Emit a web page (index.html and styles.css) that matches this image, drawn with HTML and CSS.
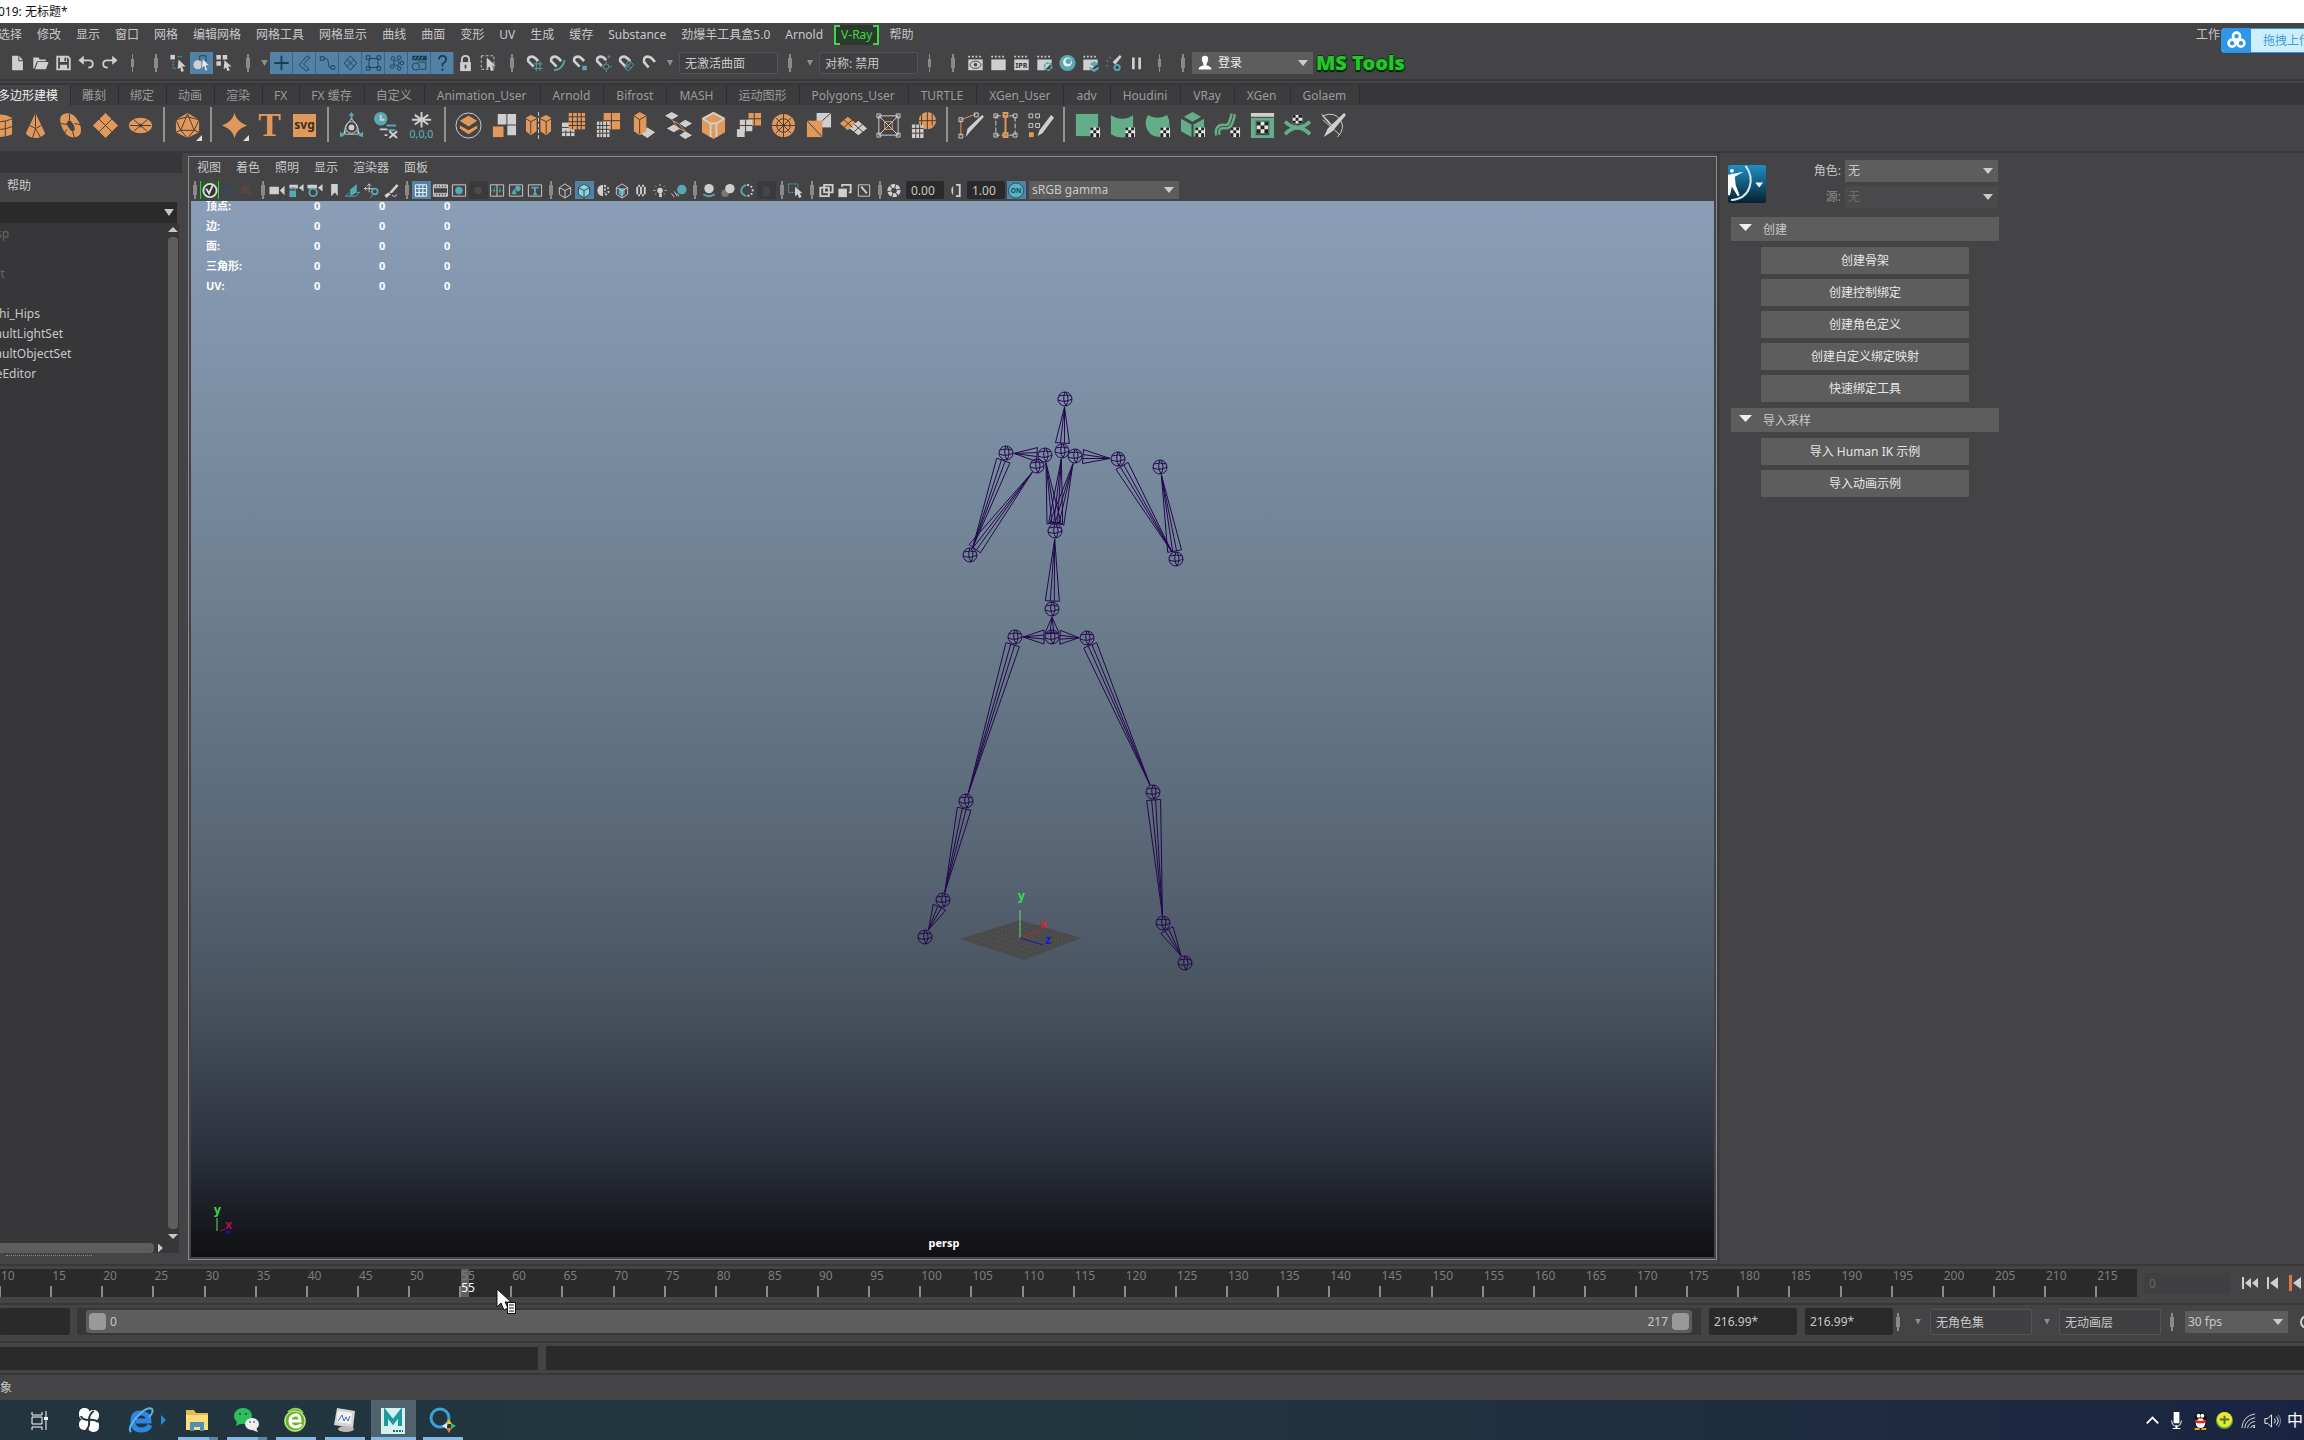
FILE: index.html
```html
<!DOCTYPE html>
<html lang="zh-CN">
<head>
    <meta charset="UTF-8">
    <meta name="viewport" content="width=device-width, initial-scale=1.0">
    <title>019: 无标题*</title>
    <link rel="stylesheet" href="styles.css">
</head>
<body>
    <header class="title-bar">019: 无标题*</header>

    <nav class="menu-bar">
        <button>选择</button>
        <button>修改</button>
        <button>显示</button>
        <button>窗口</button>
        <button>网格</button>
        <button>编辑网格</button>
        <button>网格工具</button>
        <button>网格显示</button>
        <button>曲线</button>
        <button>曲面</button>
        <button>变形</button>
        <button>UV</button>
        <button>生成</button>
        <button>缓存</button>
        <button>Substance</button>
        <button>劲爆羊工具盒5.0</button>
        <button>Arnold</button>
        <button class="vray">V-Ray</button>
        <button>帮助</button>
        <span class="workspace-label">工作</span>
    </nav>

    <!-- 拖拽上传悬浮条 -->
    <div class="upload">
        <svg class="upload-icon" viewBox="0 0 24 24"><g fill="none" stroke="#fff" stroke-width="3"><circle cx="12" cy="7" r="4"/><circle cx="7" cy="15" r="4"/><circle cx="17" cy="15" r="4"/></g></svg>
        <span>拖拽上传</span>
    </div>

    <div class="status-line">
        <button class="tool" aria-label="新建"><svg viewBox="0 0 20 20"><path class="grey" d="M4 2h7v6h5v10H4z"/><path class="grey" d="M12 2l4 5h-4z"/></svg></button>
        <button class="tool" aria-label="打开"><svg viewBox="0 0 20 20"><path class="grey" d="M2 4h6l1 2h7v2H6l-3 8H2z"/><path class="grey" d="M7 9h12l-3 8H4z"/></svg></button>
        <button class="tool" aria-label="保存"><svg viewBox="0 0 20 20"><path class="l-grey thick" d="M3 3h12l2 2v12H3z"/><path class="grey" d="M6 3h8v6H6zM6 12h8v5H6z"/><path class="dark" d="M11 4h2v4h-2z"/></svg></button>
        <button class="tool" aria-label="撤消"><svg viewBox="0 0 20 20"><path class="l-grey thick" d="M5 7h8q4 0 4 4t-5 4"/><path class="grey" d="M1 7l6-5v10z"/></svg></button>
        <button class="tool" aria-label="重做"><svg viewBox="0 0 20 20"><path class="l-grey thick" d="M15 7H7q-4 0-4 4t5 4"/><path class="grey" d="M19 7l-6-5v10z"/></svg></button>
        <i class="sep fold"></i>
        <i class="sep"></i>
        <button class="tool" aria-label="按层次选择"><svg viewBox="0 0 20 20"><path class="grey" d="M1 1h5v5H1z"/><path class="l-teal" d="M9 3h5M4 8v8h4" stroke-dasharray="2 1"/><path class="grey" d="M10 6l8 8h-4l2 5-3 1-1-5-3 2z"/></svg></button>
        <button class="tool on" aria-label="按对象选择"><svg viewBox="0 0 20 20"><path class="l-object" d="M8 8V2h7v6"/><circle class="grey" cx="6" cy="12" r="5"/><path class="pointer" d="M11 5l8 8h-4l2 5-3 1-1-5-3 2z"/></svg></button>
        <button class="tool" aria-label="按组件选择"><svg viewBox="0 0 20 20"><path class="grey" d="M1 1h5v5H1zM8 1h5v5H8zM1 8h5v5H1z"/><path class="grey" d="M10 7l8 7h-4l2 4-3 1-1-4-3 2z"/></svg></button>
        <i class="sep"></i>
        <i class="caret"></i>
        <button class="tool mask" aria-label="控制柄"><svg viewBox="0 0 20 20"><path class="l-dark thick" d="M10 2v16M2 10h16"/></svg></button>
        <button class="tool mask" aria-label="关节"><svg viewBox="0 0 20 20"><path class="l-dark" d="M13 2l3 2-7 7 6 6-3 2-8-7z"/></svg></button>
        <button class="tool mask" aria-label="曲线"><svg viewBox="0 0 20 20"><path class="l-dark" d="M2 3h4v4H2zM14 13h4v4h-4zM6 5q5-1 5 5t3 5"/></svg></button>
        <button class="tool mask" aria-label="曲面"><svg viewBox="0 0 20 20"><path class="l-dark" d="M10 2l7 8-7 8-7-8zM6 6l8 8M14 6l-8 8"/></svg></button>
        <button class="tool mask" aria-label="变形"><svg viewBox="0 0 20 20"><path class="l-dark" d="M5 5h10v10H5zM2 2h4v4H2zM14 2h4v4h-4zM2 14h4v4H2zM14 14h4v4h-4z"/></svg></button>
        <button class="tool mask" aria-label="动力学"><svg viewBox="0 0 20 20"><g class="l-dark"><circle cx="6" cy="5" r="2"/><circle cx="13" cy="4" r="2"/><circle cx="10" cy="10" r="3"/><circle cx="16" cy="10" r="2"/><circle cx="5" cy="14" r="2"/><circle cx="13" cy="16" r="2"/></g></svg></button>
        <button class="tool mask" aria-label="渲染"><svg viewBox="0 0 20 20"><path class="ink" d="M2 2h16v5H2z"/><path class="l-teal" d="M4 6l2-3M8 6l2-3M12 6l2-3"/><circle class="l-dark" cx="6" cy="14" r="4"/><path class="l-dark" d="M8 9h9v8h-7"/></svg></button>
        <button class="tool mask" aria-label="杂项"><svg viewBox="0 0 20 20"><path class="l-dark thick" d="M6 6q0-4 4-4t4 4q0 2-4 5v3M10 16v3"/></svg></button>
        <button class="tool" aria-label="锁定"><svg viewBox="0 0 20 20"><path class="grey" d="M4 9h12v10H4z"/><path class="l-grey thick" d="M6 9V6q0-4 4-4t4 4v3"/><path class="dark" d="M9 12h2v4H9z"/></svg></button>
        <button class="tool" aria-label="高亮选择"><svg viewBox="0 0 20 20"><path class="l-grey" d="M2 2h14v15H2z" stroke-dasharray="3 2"/><path class="grey" d="M8 4l10 9h-4l2 5-3 1-2-5-3 3z"/></svg></button>
        <i class="sep"></i>
        <button class="tool" aria-label="捕捉到栅格"><svg viewBox="0 0 20 20"><path class="l-grey magnet" d="M9 14L3 8q-1-5 4-5 3 0 7 5"/><path class="l-teal" d="M12 8v11M16 8v11M9 11h10M9 16h10"/></svg></button>
        <button class="tool" aria-label="捕捉到曲线"><svg viewBox="0 0 20 20"><path class="l-grey magnet" d="M9 14L3 8q-1-5 4-5 3 0 7 5"/><path class="l-teal thick" d="M6 18q9 0 12-11"/></svg></button>
        <button class="tool" aria-label="捕捉到点"><svg viewBox="0 0 20 20"><path class="l-grey magnet" d="M9 14L3 8q-1-5 4-5 3 0 7 5"/><path class="teal" d="M12 13h5v5h-5z"/></svg></button>
        <button class="tool" aria-label="捕捉到投影中心"><svg viewBox="0 0 20 20"><path class="l-grey magnet" d="M8 13L3 8q-1-5 4-5 3 0 6 4"/><g class="l-teal"><circle cx="13" cy="14" r="3"/><path d="M13 8v2M13 18v2M7 14h2M17 14h2"/><circle cx="16" cy="3" r="1"/></g></svg></button>
        <button class="tool" aria-label="捕捉到平面"><svg viewBox="0 0 20 20"><path class="l-grey magnet" d="M9 14L3 8q-1-5 4-5 3 0 7 5"/><path class="l-teal" d="M13 7l5 5-6 7-5-5zM10 11l5 5M15 9l-6 8"/></svg></button>
        <button class="tool" aria-label="激活"><svg viewBox="0 0 20 20"><path class="l-grey magnet" d="M9 15L4 9Q3 3 8 3q4 0 8 6"/></svg></button>
        <i class="caret wide"></i>
        <input class="field" aria-label="激活曲面" value="无激活曲面">
        <i class="sep"></i>
        <i class="caret wide"></i>
        <input class="field" aria-label="对称" value="对称: 禁用">
        <i class="sep fold"></i>
        <i class="sep"></i>
        <button class="tool" aria-label="渲染视图"><svg viewBox="0 0 20 20"><path class="grey" d="M2 6h16v12H2z"/><path class="l-grey thick" d="M2 3h16" stroke-dasharray="2 2"/><ellipse class="l-dark" cx="10" cy="12" rx="6" ry="4"/><circle class="dark" cx="10" cy="12" r="2"/></svg></button>
        <button class="tool" aria-label="渲染当前帧"><svg viewBox="0 0 20 20"><path class="grey" d="M2 6h16v12H2z"/><path class="l-grey thick" d="M2 3h16" stroke-dasharray="2 2"/></svg></button>
        <button class="tool" aria-label="IPR 渲染"><svg viewBox="0 0 20 20"><path class="grey" d="M2 6h16v12H2z"/><path class="l-grey thick" d="M2 3h16" stroke-dasharray="2 2"/><text class="ipr" x="10" y="15" text-anchor="middle">IPR</text></svg></button>
        <button class="tool" aria-label="渲染设置"><svg viewBox="0 0 20 20"><path class="grey" d="M2 6h16v4l-8 8H2z"/><path class="l-grey thick" d="M2 3h16" stroke-dasharray="2 2"/><circle class="l-teal thick" cx="14" cy="14" r="4" stroke-dasharray="3 1"/></svg></button>
        <button class="tool" aria-label="Hypershade"><svg viewBox="0 0 20 20"><circle class="teal" cx="10" cy="10" r="9"/><circle cx="10" cy="9" r="5" fill="#eee"/><circle class="teal" cx="11" cy="8" r="3"/></svg></button>
        <button class="tool" aria-label="渲染设置编辑器"><svg viewBox="0 0 20 20"><path class="grey" d="M2 6h16v4l-8 8H2z"/><path class="l-grey thick" d="M2 3h16" stroke-dasharray="2 2"/><path class="teal" d="M14 8l5 3-5 3-5-3zM9 14l5 3 5-3v3l-5 3-5-3z"/></svg></button>
        <button class="tool" aria-label="灯光编辑器"><svg viewBox="0 0 20 20"><path class="grey" d="M17 1l2 2-7 9-3-3z"/><path class="l-teal" d="M2 7l3 2M2 13h3M6 3l1 3" stroke-dasharray="2 1"/><circle class="l-teal thick" cx="14" cy="15" r="3"/></svg></button>
        <button class="tool" aria-label="暂停"><svg viewBox="0 0 20 20"><path class="grey" d="M5 4h3v13H5zM12 4h3v13h-3z"/></svg></button>
        <i class="sep fold"></i>
        <i class="sep"></i>
        <label class="login">
            <svg viewBox="0 0 20 20"><path fill="#fff" d="M6 5q0-4 4-4t4 4q0 3-2 6v2q6 1 6 5H2q0-4 6-5v-2Q6 8 6 5z"/></svg>
            <select aria-label="帐户"><option>登录</option></select>
        </label>
        <a class="ms-tools" href="#">MS Tools</a>
    </div>

    <div class="shelf-tabs">
        <button class="active">多边形建模</button>
        <button>雕刻</button>
        <button>绑定</button>
        <button>动画</button>
        <button>渲染</button>
        <button>FX</button>
        <button>FX 缓存</button>
        <button>自定义</button>
        <button class="user">Animation_User</button>
        <button class="user">Arnold</button>
        <button class="user">Bifrost</button>
        <button class="user">MASH</button>
        <button>运动图形</button>
        <button class="user">Polygons_User</button>
        <button class="user">TURTLE</button>
        <button class="user">XGen_User</button>
        <button class="user">adv</button>
        <button class="user">Houdini</button>
        <button class="user">VRay</button>
        <button class="user">XGen</button>
        <button class="user">Golaem</button>
    </div>

    <div class="shelf">
        <button aria-label="圆柱体"><svg viewBox="0 0 28 28"><path class="orange" d="M2 6q12-7 24 0v17q-12 6-24 0z"/><path class="l-dark" d="M2 7q12 6 24 0M2 15q12 6 24 0M10 9v17M19 9v17"/></svg></button>
        <button aria-label="圆锥体"><svg viewBox="0 0 28 28"><path class="orange" d="M14 1l10 21q-3 5-10 5T4 22z"/><path class="l-dark" d="M14 2v14M8 14l6 3 6-3M14 17l-3 10M14 17l5 9"/></svg></button>
        <button aria-label="圆环"><svg viewBox="0 0 28 28"><path class="orange" fill-rule="evenodd" d="M7 2q10-3 16 9 5 12-3 15Q11 28 6 18 0 5 7 2zm5 7q-4 2 0 7 4 6 6 3 1-3-1-6-3-5-5-4z"/><path class="l-dark" d="M4 12l7 1M13 2v7M18 12l6 1M16 20l2 6M10 18l-2 4"/></svg></button>
        <button aria-label="平面"><svg viewBox="0 0 28 28"><path class="orange" d="M14 1l13 13-13 13L1 14z"/><path class="l-dark" d="M7 7l14 14M21 7L7 21"/></svg></button>
        <button aria-label="圆盘"><svg viewBox="0 0 28 28"><ellipse class="orange" cx="14" cy="14" rx="12" ry="8"/><path class="l-dark" d="M3 14h22M7 8l14 12M21 8L7 20"/><circle class="dark" cx="14" cy="14" r="2"/></svg></button>
        <i class="bar"></i>
        <button class="more" aria-label="柏拉图多面体"><svg viewBox="0 0 28 28"><path class="orange" d="M14 1l12 7v13l-12 6-12-6V8z"/><path class="l-dark" d="M14 2l-7 17h14zM2 8l5 11 7 8 7-8 5-11M7 19l-5 2M21 19l5 2M2 8l12-3 12 3"/></svg></button>
        <i class="bar"></i>
        <button class="more" aria-label="超形状"><svg viewBox="0 0 28 28"><path class="orange" d="M14 1q2 9 13 13-11 4-13 13-2-9-13-13Q12 10 14 1z"/></svg></button>
        <button class="type" aria-label="类型">T</button>
        <button aria-label="SVG"><span class="svg-badge">svg</span></button>
        <i class="bar"></i>
        <button aria-label="枢轴"><svg viewBox="0 0 28 28"><path class="l-teal thick" d="M14 2v6M4 24l5-5M24 24l-5-5"/><path class="l-grey" d="M14 7q9 9 7 16H7q-2-7 7-16z"/><circle class="l-grey" cx="14" cy="16" r="6"/><circle class="grey" cx="14" cy="16" r="3"/><path class="teal" d="M14 0l3 4h-6zM2 26v-6l5 5zM26 26v-6l-5 5z"/></svg></button>
        <button aria-label="删除历史"><svg viewBox="0 0 28 28"><circle class="teal" cx="8" cy="7" r="7"/><path class="l-grey" d="M8 3v5h4M7 18h8M12 24h3" stroke-width="2"/><path class="l-teal thick" d="M14 14h10M16 19h7"/><path class="l-grey thick" d="M17 20l8 7M25 20l-8 7"/></svg></button>
        <button aria-label="冻结变换"><svg viewBox="0 0 28 28"><path class="l-grey thick" d="M14 0v16M7 3l14 10M21 3L7 13M4 8h20"/><text class="zeros" x="14" y="27" text-anchor="middle">0,0,0</text></svg></button>
        <i class="bar"></i>
        <button aria-label="结合"><svg viewBox="0 0 28 28"><circle class="l-grey" cx="14" cy="14" r="13"/><path class="orange" d="M14 4l9 5-9 6-9-6zM5 14l9 5 9-5v3l-9 6-9-6z"/></svg></button>
        <button aria-label="分离"><svg viewBox="0 0 28 28"><path class="grey" d="M8 2h9v11H8zM18 2h9v11h-9zM18 14h9v10h-9z"/><path class="orange" d="M3 15h11v11H3z"/></svg></button>
        <button aria-label="镜像"><svg viewBox="0 0 28 28"><path class="orange" d="M1 6l5-3 6 3v14l-6 4-5-4zM16 6l6-3 5 3v14l-5 4-6-4z"/><path class="l-dark" d="M1 7l5 3 6-3M6 10v13M16 7l6 3 5-3M22 10v13"/><path class="l-grey" d="M14 0v28" stroke-dasharray="4 2"/></svg></button>
        <button aria-label="平滑"><svg viewBox="0 0 28 28"><path class="grey" d="M2 11h13v14H2z"/><path class="orange" d="M9 1h17v17H9z"/><path class="l-dark" d="M13 1v17M18 1v17M22 1v17M9 5h17M9 10h17M9 14h17M6 19v6M11 19v6M2 21h13M2 16h7"/></svg></button>
        <button aria-label="减少"><svg viewBox="0 0 28 28"><path class="orange" d="M9 1h17v17H9z"/><path class="grey" d="M2 10h13v16H2z"/><path class="l-dark" d="M17 1v17M9 9h17M5 10v16M8 10v16M12 10v16M2 14h13M2 18h13M2 22h13"/></svg></button>
        <button aria-label="挤出"><svg viewBox="0 0 28 28"><path class="grey" d="M9 21l9-5 8 5-8 6z"/><path class="orange" d="M4 4l6-4 7 4v16l-7 4-6-4z"/><path class="l-dark" d="M4 4l6 4 7-4M10 8v15"/></svg></button>
        <button aria-label="桥接"><svg viewBox="0 0 28 28"><path class="grey" d="M0 4l7-4 7 4-7 4zM15 12l6-4 7 4-7 4zM2 17l7-4 7 4-7 4zM15 24l6-4 7 4-7 4z"/><path class="l-orange" d="M8 9l6 3 7 8-7-3z"/></svg></button>
        <button aria-label="倒角"><svg viewBox="0 0 28 28"><path class="orange" d="M14 0l12 6v15l-12 7-12-7V6z"/><path class="l-grey thick" d="M3 7l8 5v14M25 7l-8 5v14M11 12h6M14 1L3 7M14 1l11 6"/></svg></button>
        <button aria-label="合并"><svg viewBox="0 0 28 28"><path class="orange" d="M14 1h13v13H14z"/><path class="grey" d="M5 8h13v12H5zM2 18h8v8H2z"/><path class="l-dark" d="M14 7h13M20 1v13M11 8v12M5 14h13"/></svg></button>
        <button aria-label="目标焊接"><svg viewBox="0 0 28 28"><circle class="orange" cx="14" cy="14" r="12"/><g class="l-dark"><circle cx="14" cy="14" r="7"/><path d="M14 2v24M2 14h24M6 6l16 16M22 6L6 22"/></g></svg></button>
        <button aria-label="三角化"><svg viewBox="0 0 28 28"><path class="grey" d="M12 1h15v15H12z"/><path class="orange" d="M2 9h16v17H2z"/><path class="l-dark" d="M2 9l16 17M18 9l9-8"/></svg></button>
        <button aria-label="四边形化"><svg viewBox="0 0 28 28"><path class="orange" d="M0 12l8-7 9 7-9 7z"/><path class="grey" d="M10 17l9-8 9 8-9 7z"/><path class="l-dark" d="M4 8l9 8M13 8l-9 8M15 13l9 8M23 13l-9 8"/></svg></button>
        <button aria-label="晶格"><svg viewBox="0 0 28 28"><path class="l-grey" d="M4 4h20v20H4zM4 4l20 20M24 4L4 24M2 2h4v4H2zM22 2h4v4h-4zM2 22h4v4H2zM22 22h4v4h-4z"/><path class="l-orange" d="M10 10h8v8h-8z"/></svg></button>
        <button aria-label="布尔"><svg viewBox="0 0 28 28"><circle class="orange" cx="18" cy="9" r="9"/><path class="grey" d="M2 13h12v14H2z"/><path class="l-dark" d="M18 0v18M9 9h18M6 13v14M10 13v14M2 17h12M2 22h12M12 2v12M23 2v12"/></svg></button>
        <i class="bar"></i>
        <button aria-label="多切割"><svg viewBox="0 0 28 28"><path class="l-orange" d="M4 25V8l16-6"/><path class="grey" d="M26 3l2 2-14 15-5 6 2-9z"/><path class="l-grey" d="M2 6h4v4H2zM2 23h4v4H2zM18 1h4v4h-4z"/></svg></button>
        <button aria-label="插入循环边"><svg viewBox="0 0 28 28"><path class="l-grey" d="M4 4h20v20H4z" stroke-dasharray="5 2"/><path class="l-orange thick" d="M14 5v18M12 1h4v4h-4zM12 22h4v4h-4z"/><path class="l-grey" d="M2 2h4v4H2zM22 2h4v4h-4zM2 22h4v4H2zM22 22h4v4h-4z"/></svg></button>
        <button aria-label="偏移循环边"><svg viewBox="0 0 28 28"><path class="l-grey" d="M2 2h4v4H2zM9 2h4v4H9zM2 12h4v4H2zM9 12h4v4H9z"/><path class="orange" d="M2 21h5v5H2z"/><path class="grey" d="M25 3l3 3-12 16-5 3 2-6z"/></svg></button>
        <i class="bar"></i>
        <button aria-label="平面映射"><svg viewBox="0 0 28 28"><path class="green" d="M2 2h23v23H2z"/><path class="checker-bg" d="M17 16h10v10H17z"/><path class="checker" d="M17 16h3v3h-3zM23 16h3v3h-3zM20 19h3v3h-3zM17 22h3v4h-3zM23 22h3v4h-3z"/></svg></button>
        <button aria-label="圆柱形映射"><svg viewBox="0 0 28 28"><path class="green" d="M2 3q12 8 23 0v20q-12 7-23 0z"/><path class="checker-bg" d="M17 16h10v10H17z"/><path class="checker" d="M17 16h3v3h-3zM23 16h3v3h-3zM20 19h3v3h-3zM17 22h3v4h-3zM23 22h3v4h-3z"/></svg></button>
        <button aria-label="球形映射"><svg viewBox="0 0 28 28"><path class="green" d="M4 3q10 6 20 0 5 10 0 20-9 6-17 0-9-9-3-20z"/><path class="checker-bg" d="M17 16h10v10H17z"/><path class="checker" d="M17 16h3v3h-3zM23 16h3v3h-3zM20 19h3v3h-3zM17 22h3v4h-3zM23 22h3v4h-3z"/></svg></button>
        <button aria-label="自动映射"><svg viewBox="0 0 28 28"><path class="green" d="M14 0l9 5-9 5-9-5zM2 7l11 6v13L2 20zM26 7l-11 6v13l11-6z"/><path class="checker-bg" d="M17 16h10v10H17z"/><path class="checker" d="M17 16h3v3h-3zM23 16h3v3h-3zM20 19h3v3h-3zM17 22h3v4h-3zM23 22h3v4h-3z"/></svg></button>
        <button aria-label="轮廓拉伸"><svg viewBox="0 0 28 28"><path fill="none" stroke="#63ad88" stroke-width="6" d="M4 24q-2-9 6-9 5 1 7-3 2-5 3-10"/><path class="l-dark" d="M4 24q-2-9 6-9 5 1 7-3 2-5 3-10"/><path class="checker-bg" d="M17 16h10v10H17z"/><path class="checker" d="M17 16h3v3h-3zM23 16h3v3h-3zM20 19h3v3h-3zM17 22h3v4h-3zM23 22h3v4h-3z"/></svg></button>
        <button aria-label="UV 编辑器"><svg viewBox="0 0 28 28"><path class="grey" d="M2 1h24v4H2z"/><path class="green" d="M2 6h24v21H2z"/><path class="dark" d="M7 9h14v15H7z"/><path class="checker-bg" d="M8 10h12v12H8z"/><path class="checker" d="M8 10h4v4H8zM16 10h4v4h-4zM12 14h4v4h-4zM8 18h4v4H8zM16 18h4v4h-4z"/></svg></button>
        <button aria-label="3D 切割和缝合"><svg viewBox="0 0 28 28"><path fill="none" stroke="#63ad88" stroke-width="4" d="M1 10q13 12 26 0M1 23q13-13 26 0"/><path class="checker-bg" d="M9 3h10v9H9z"/><path class="checker" d="M9 3h3v3H9zM15 3h4v3h-4zM12 6h3v3h-3zM9 9h3v3H9zM15 9h4v3h-4z"/></svg></button>
        <button aria-label="雕刻"><svg viewBox="0 0 28 28"><path class="l-grey" d="M4 4q12-5 18 4t-3 18M4 8l18 16"/><path class="grey" d="M2 1l8 8 4 5-3-1-7-8zM26 1l2 2-14 17-9 6 4-9z"/></svg></button>
    </div>

    <main class="workspace">
        <aside class="outliner">
            <div class="outliner-menu"><button>帮助</button></div>
            <label class="search"><input aria-label="搜索"><i class="caret"></i></label>
            <div class="outliner-body">
                <ul class="nodes">
                    <li class="dim">persp</li>
                    <li class="dim"></li>
                    <li class="dim">front</li>
                    <li></li>
                    <li>ochi_Hips</li>
                    <li>defaultLightSet</li>
                    <li>defaultObjectSet</li>
                    <li>timeEditor</li>
                </ul>
                <div class="scroll-y"><i class="up"></i><b></b><i class="down"></i></div>
            </div>
            <div class="scroll-x"><b></b><i></i></div>
            <div class="grip"></div>
        </aside>

        <section class="panel">
            <nav class="panel-menu">
                <button>视图</button>
                <button>着色</button>
                <button>照明</button>
                <button>显示</button>
                <button>渲染器</button>
                <button>面板</button>
            </nav>
            <div class="panel-tools">
                <i class="sep"></i>
                <button class="vray-on" aria-label="V-Ray"><svg viewBox="0 0 18 18"><circle cx="9" cy="9" r="7" fill="#333" stroke="#ddd" stroke-width="2"/><path fill="none" stroke="#ddd" stroke-width="2" d="M5 7l3 5 4-9"/></svg></button>
                <button aria-label="IPR"><svg viewBox="0 0 18 18"><circle cx="9" cy="9" r="5" fill="#3d4854"/></svg></button>
                <button aria-label="区域"><svg viewBox="0 0 18 18"><path fill="#5a4540" d="M3 4h9v7l4 5-7-4H3z"/></svg></button>
                <i class="sep"></i>
                <button aria-label="选择摄影机"><svg viewBox="0 0 18 18"><path class="grey" d="M1 5h10v8H1zM12 9l5-5v10z"/></svg></button>
                <button aria-label="锁定摄影机"><svg viewBox="0 0 18 18"><path class="grey" d="M2 3h9v4H2zM12 6l5-4v8z"/><path class="teal" d="M2 9h7v7H2z"/><path class="l-teal" d="M4 9V6h4v3"/></svg></button>
                <button aria-label="摄影机属性"><svg viewBox="0 0 18 18"><path class="grey" d="M1 3h10v4H1zM12 6l5-4v8z"/><circle class="l-teal thick" cx="7" cy="11" r="4"/></svg></button>
                <button aria-label="书签"><svg viewBox="0 0 18 18"><path class="grey" d="M6 2h7v13l-3-4-4 4z"/></svg></button>
                <button aria-label="图像平面"><svg viewBox="0 0 18 18"><path class="teal" d="M6 8l7-6v9l-7 4z"/><path class="l-teal" d="M5 11l-4 4h11l4-4h-3"/></svg></button>
                <button aria-label="二维平移"><svg viewBox="0 0 18 18"><path class="l-grey" d="M1 7h9M6 2v9M4 4l2-2 2 2M3 5L1 7l2 2"/><circle class="l-teal thick" cx="12" cy="10" r="3"/><path class="l-teal" d="M10 13l-3 4"/></svg></button>
                <button aria-label="油性铅笔"><svg viewBox="0 0 18 18"><path class="grey" d="M15 2l2 2-7 8-3-1zM2 14l4-3 3 2-5 4z"/><path class="l-grey" d="M10 14q4 3 5-1"/></svg></button>
                <i class="sep"></i>
                <button class="on" aria-label="栅格"><svg viewBox="0 0 18 18"><path class="l-white" d="M3 3h12v12H3zM7 3v12M11 3v12M3 7h12M3 11h12"/></svg></button>
                <button aria-label="胶片门"><svg viewBox="0 0 18 18"><path class="l-grey" d="M2 3h15v12H2zM2 6h15M2 12h15"/><path class="l-grey thick" d="M3 4h14M3 14h14" stroke-dasharray="2 1"/></svg></button>
                <button aria-label="分辨率门"><svg viewBox="0 0 18 18"><path class="l-grey" d="M2 3h14v12H2z"/><circle class="teal" cx="9" cy="9" r="4"/></svg></button>
                <button class="off" aria-label="门遮罩"><svg viewBox="0 0 18 18"><circle cx="9" cy="9" r="4" fill="#4c4c4c"/></svg></button>
                <button aria-label="区域图"><svg viewBox="0 0 18 18"><path class="l-grey" d="M2 3h14v12H2zM9 3v12" /><path class="l-teal" d="M2 9h14M6 6v6M12 6v6" stroke-dasharray="2 1"/></svg></button>
                <button aria-label="安全动作"><svg viewBox="0 0 18 18"><path class="l-grey" d="M2 3h14v12H2z"/><circle class="teal" cx="11" cy="7" r="3"/><path class="teal" d="M4 13l3-6 3 6z"/></svg></button>
                <button aria-label="安全标题"><svg viewBox="0 0 18 18"><path class="l-grey" d="M2 3h14v12H2z"/><path class="l-teal thick" d="M5 6h8M9 6v7M7 13h4"/></svg></button>
                <i class="sep"></i>
                <button aria-label="线框"><svg viewBox="0 0 18 18"><path class="l-grey" d="M9 2l6 4v7l-6 4-6-4V6zM3 6l6 3 6-3M9 9v8"/></svg></button>
                <button class="on" aria-label="着色"><svg viewBox="0 0 18 18"><path fill="#7fd8e4" d="M9 2l6 4v7l-6 4-6-4V6z"/><path class="l-dark" d="M9 2l6 4v7l-6 4-6-4V6zM3 6l6 3 6-3M9 9v8"/></svg></button>
                <button aria-label="默认材质"><svg viewBox="0 0 18 18"><path class="grey" d="M9 3a6 6 0 000 12z"/><path class="l-grey thick" d="M10 4q5 1 5 5t-5 5M11 7v5" stroke-dasharray="2 2"/></svg></button>
                <button aria-label="着色线框"><svg viewBox="0 0 18 18"><path class="teal" d="M6 6l6 1v6l-4 2-3-3z"/><path class="l-grey" d="M9 2l6 4v7l-6 4-6-4V6zM3 6l6 3 6-3M9 9v8"/></svg></button>
                <button aria-label="纹理"><svg viewBox="0 0 18 18"><path class="l-grey thick" d="M6 4h7M4 6h11M4 8h11M4 10h11M4 12h11M6 14h7" stroke-dasharray="2 2"/></svg></button>
                <button aria-label="灯光"><svg viewBox="0 0 18 18"><circle class="grey" cx="9" cy="9" r="3"/><path class="grey" d="M8 12h3v4H8z"/><path class="l-grey" d="M9 2v2M2 9h2M14 9h2M4 4l1 1M14 4l-1 1M4 13l1-1M14 13l-1-1"/></svg></button>
                <button aria-label="阴影"><svg viewBox="0 0 18 18"><circle class="teal" cx="12" cy="8" r="5"/><path class="l-grey" d="M1 12l3 4M4 10l3 5M7 12l2 3"/></svg></button>
                <i class="sep"></i>
                <button aria-label="环境光遮挡"><svg viewBox="0 0 18 18"><circle class="grey" cx="9" cy="7" r="5"/><path class="l-teal thick" d="M3 13q6 4 12 0"/></svg></button>
                <button aria-label="运动模糊"><svg viewBox="0 0 18 18"><circle cx="6" cy="12" r="4" fill="#777"/><circle class="grey" cx="11" cy="7" r="5"/></svg></button>
                <button aria-label="抗锯齿"><svg viewBox="0 0 18 18"><path class="l-teal thick" d="M8 3Q3 5 3 9t5 6"/><path class="l-grey thick" d="M9 3q6 1 6 6t-6 6" stroke-dasharray="2 2"/></svg></button>
                <button class="off" aria-label="景深"><svg viewBox="0 0 18 18"><path fill="#3c4a4b" d="M6 5h7v10H6z"/></svg></button>
                <i class="sep"></i>
                <button aria-label="隔离选择"><svg viewBox="0 0 18 18"><path class="l-teal" d="M1 2h10v9H1z" stroke-dasharray="2 1"/><path class="grey" d="M8 5l8 7h-3l2 4-3 1-1-4-3 2z"/></svg></button>
                <i class="sep"></i>
                <button aria-label="X 射线"><svg viewBox="0 0 18 18"><path class="l-grey thick" d="M3 6h9v9H3z"/><path class="l-grey thick" d="M7 3h9v8H7z"/></svg></button>
                <button aria-label="X 射线关节"><svg viewBox="0 0 18 18"><path class="grey" d="M2 7h9v9H2z"/><path class="l-grey thick" d="M6 5V3h9v8h-2"/></svg></button>
                <button aria-label="X 射线活动组件"><svg viewBox="0 0 18 18"><path class="l-grey" d="M3 3h12v12H3z"/><path class="l-grey thick" d="M6 5l6 7"/></svg></button>
                <i class="sep"></i>
                <button aria-label="曝光"><svg viewBox="0 0 18 18"><circle cx="9" cy="9" r="5" fill="none" stroke="#cfcfcf" stroke-width="4" stroke-dasharray="4 1"/></svg></button>
                <input class="number" aria-label="曝光值" value="0.00">
                <button aria-label="伽马"><svg viewBox="0 0 18 18"><path class="grey" d="M7 4q-4 5 0 10z"/><path class="l-grey thick" d="M10 3h4v12h-4"/></svg></button>
                <input class="number" aria-label="伽马值" value="1.00">
                <button class="on" aria-label="颜色管理"><svg viewBox="0 0 18 18"><circle cx="9" cy="9" r="8" fill="#56b4c4" stroke="#2b4a5a"/><text class="on-text" x="9" y="12" text-anchor="middle">ON</text></svg></button>
                <select class="gamma" aria-label="视图变换"><option>sRGB gamma</option></select>
            </div>

            <div class="viewport">
                <svg class="scene" viewBox="191 201 1523 1056" preserveAspectRatio="xMidYMid slice">
                    <polygon points="960,939 1020,920 1081,938 1024,960" fill="#4b4a4a"/>
                    <g id="grid" stroke="#5c5b5a" stroke-dasharray="1 3"></g>
                    <g fill="none" stroke-width="1">
                        <path stroke="#5fe070" d="M1020 938v-28"/>
                        <path stroke="#c02828" d="M1023 937l18-7"/>
                        <path stroke="#1818b0" d="M1020 938l23 7"/>
                    </g>
                    <g class="axis">
                        <text x="1018" y="900" fill="#35e04a">y</text>
                        <text x="1040" y="928" fill="#d02828">x</text>
                        <text x="1045" y="944" fill="#1818d0">z</text>
                        <text x="214" y="1214" fill="#35e04a">y</text>
                        <text x="225" y="1229" fill="#b0104a">x</text>
                    </g>
                    <path d="M217 1218v13" stroke="#70d080"/>
                    <path d="M220 1231l5-2" stroke="#a02020"/>
                    <path d="M225 1232h5" stroke="#1c10a0" stroke-width="3"/>
                    <g id="skeleton" class="skeleton"></g>
                    <text class="camera-name" x="944" y="1247" text-anchor="middle">persp</text>
                </svg>
                <table class="hud">
                    <tr><th>顶点:</th><td>0</td><td>0</td><td>0</td></tr>
                    <tr><th>边:</th><td>0</td><td>0</td><td>0</td></tr>
                    <tr><th>面:</th><td>0</td><td>0</td><td>0</td></tr>
                    <tr><th>三角形:</th><td>0</td><td>0</td><td>0</td></tr>
                    <tr><th>UV:</th><td>0</td><td>0</td><td>0</td></tr>
                </table>
            </div>
        </section>

        <aside class="character">
            <div class="character-head">
                <button class="hik" aria-label="HumanIK"><svg viewBox="0 0 40 40"><defs><linearGradient id="hik" x1="0" y1="0" x2="0" y2="1"><stop offset="0" stop-color="#1f8fc4"/><stop offset="1" stop-color="#08202f"/></linearGradient></defs><rect width="39" height="39" rx="2" fill="url(#hik)"/><path fill="none" stroke="#d5ecf6" stroke-width="2" d="M18 1q8 10 4 22T3 36"/><circle cx="4" cy="6" r="2" fill="#fff"/><path fill="#fff" d="M0 10l16-3-9 5 1 9 4 10-2 1-6-10-2 9H0z"/><path fill="#fff" d="M28 18h8l-4 5z"/></svg></button>
                <div class="character-form">
                    <label for="role">角色:</label>
                    <select id="role"><option>无</option></select>
                    <label for="source">源:</label>
                    <select id="source" disabled><option>无</option></select>
                </div>
            </div>
            <div class="group">
                <h2>创建</h2>
                <button>创建骨架</button>
                <button>创建控制绑定</button>
                <button>创建角色定义</button>
                <button>创建自定义绑定映射</button>
                <button>快速绑定工具</button>
            </div>
            <div class="group">
                <h2>导入采样</h2>
                <button>导入 Human IK 示例</button>
                <button>导入动画示例</button>
            </div>
        </aside>
    </main>

    <div class="time-row">
        <div class="timeline">
            <ol id="ticks"></ol>
        </div>
        <input class="current-time" aria-label="当前时间" value="0">
        <div class="playback">
            <button aria-label="转到开头"><svg viewBox="0 0 16 16"><path class="grey" d="M0 2h2v12H0zM9 3v10L3 8zM16 3v10l-6-5z"/></svg></button>
            <button aria-label="后退一帧"><svg viewBox="0 0 16 16"><path class="grey" d="M2 2h2v12H2zM13 2v12L5 8z"/></svg></button>
            <button aria-label="后退一关键帧"><svg viewBox="0 0 16 16"><path fill="#d8784a" d="M1 0h3v16H1z"/><path class="grey" d="M13 2v12L5 8z"/></svg></button>
        </div>
    </div>

    <div class="range-row">
        <input class="range-start" aria-label="动画开始时间">
        <div class="range"><div class="range-bar"><i></i><span>0</span><span class="range-end">217</span><i></i></div></div>
        <input class="range-value" aria-label="播放结束时间" value="216.99*">
        <input class="range-value" aria-label="动画结束时间" value="216.99*">
        <i class="sep"></i>
        <i class="caret wide"></i>
        <input class="field" aria-label="角色集" value="无角色集">
        <i class="caret wide"></i>
        <input class="field" aria-label="动画层" value="无动画层">
        <i class="sep"></i>
        <select class="fps" aria-label="帧速率"><option>30 fps</option></select>
        <svg class="loop" viewBox="0 0 16 16"><circle cx="8" cy="8" r="6" fill="none" stroke="#cfcfcf" stroke-width="2"/></svg>
    </div>

    <div class="command-row">
        <input class="command" aria-label="MEL">
        <output class="result"></output>
    </div>
    <div class="help-line">选择对象</div>

    <footer class="taskbar">
        <button aria-label="任务视图"><svg viewBox="0 0 28 28"><path fill="none" stroke="#fff" d="M6 6v3h10V6M6 11h10v7H6zM6 24v-3h10v3M20 5v19"/><path fill="#fff" d="M18 11h4v3h-4z"/></svg></button>
        <button aria-label="风扇"><svg viewBox="0 0 28 28"><g fill="#fff"><rect x="4" y="2" width="11" height="12" rx="5"/><rect x="13" y="4" width="11" height="11" rx="5"/><rect x="4" y="13" width="11" height="11" rx="5"/><rect x="13" y="14" width="11" height="12" rx="5"/></g><path fill="none" stroke="#22353f" stroke-width="2" d="M14 14Q7 14 6 10M14 14q0-6 5-9M14 14q6-1 9 2M14 14q1 7-3 10"/></svg></button>
        <button class="ie" aria-label="Internet Explorer"><svg viewBox="0 0 28 28"><path fill="none" stroke="#2f86e0" stroke-width="5" d="M23 19q-2 5-9 5-8 0-8-9t8-8 8 8H9"/><path fill="none" stroke="#5fb2f2" stroke-width="2" d="M4 26Q0 22 10 11T25 3q2 3-3 8"/></svg><i></i></button>
        <button class="run double" aria-label="资源管理器"><svg viewBox="0 0 28 28"><path fill="#e9b949" d="M3 4h8l2 3h12v17H3z"/><path fill="#fbdc7e" d="M3 9h22v15H3z"/><path fill="#4b93b5" d="M7 16h14v9h-4v-4h-6v4H7z"/></svg></button>
        <button class="run double" aria-label="微信"><svg viewBox="0 0 28 28"><ellipse cx="11" cy="10" rx="9" ry="8" fill="#2fbd5c"/><path fill="#2fbd5c" d="M5 15l-1 5 6-3z"/><circle cx="8" cy="8" r="1" fill="#153"/><circle cx="14" cy="8" r="1" fill="#153"/><ellipse cx="20" cy="18" rx="7" ry="6" fill="#eee"/><path fill="#eee" d="M24 22l2 4-6-2z"/><circle cx="18" cy="16" r="1" fill="#777"/><circle cx="22" cy="16" r="1" fill="#777"/></svg></button>
        <button class="run" aria-label="浏览器"><svg viewBox="0 0 28 28"><circle cx="14" cy="15" r="11" fill="#6cb52d"/><circle cx="14" cy="15" r="10" fill="none" stroke="#d8f0b8"/><path fill="none" stroke="#fff" stroke-width="3" d="M20 18q-1 3-6 3-5-1-5-6t5-6 5 6h-9"/><path fill="none" stroke="#8ed34e" stroke-width="2" d="M7 6q9-7 15 1"/></svg></button>
        <button class="run" aria-label="监视器"><svg viewBox="0 0 28 28"><path fill="#d5d5d5" d="M7 2l18 3-2 17L4 19z"/><path fill="#f4f4f4" d="M8 5l14 2-1 11-14-2z"/><path fill="none" stroke="#3977b5" d="M8 15l4-6 2 6 2-4 2 4 2-5"/><ellipse cx="16" cy="23" rx="8" ry="3" fill="#b8b8b8"/></svg></button>
        <button class="run current" aria-label="Maya"><svg viewBox="0 0 28 28"><path fill="#d4f1ef" d="M2 2h24v26H2z"/><path fill="none" stroke="#1d9aa0" stroke-width="4" d="M7 20V7l7 9 7-9v13"/><path stroke="#0f6a72" stroke-width="2" d="M14 25h10" stroke-dasharray="2 1"/></svg></button>
        <button class="run" aria-label="录屏"><svg viewBox="0 0 28 28"><circle cx="12" cy="12" r="9" fill="none" stroke="#3ba0d4" stroke-width="3"/><path fill="#f0c030" d="M21 13l3 5h-6z"/><path fill="#40b868" d="M28 20l-5 3v-6z"/><path fill="#e87830" d="M21 27l-3-5h6z"/><path fill="#e8e8e8" d="M14 20l5-3v6z"/></svg></button>
        <div class="tray">
            <svg viewBox="0 0 20 20"><path fill="none" stroke="#fff" stroke-width="2" d="M4 13l6-6 6 6"/></svg>
            <svg viewBox="0 0 20 20"><path fill="#fff" d="M7 1h6v12H7zM9 15h2v4H9zM6 18h8v1H6z"/><path fill="none" stroke="#fff" d="M5 10q0 6 5 6t5-6"/></svg>
            <svg viewBox="0 0 20 20"><ellipse cx="10" cy="10" rx="7" ry="9" fill="#111"/><ellipse cx="10" cy="13" rx="5" ry="5" fill="#fff"/><path fill="#d8262c" d="M4 9q6 3 12 0v3q-6 2-12 0z"/><circle cx="8" cy="5" r="2" fill="#fff"/><circle cx="12" cy="5" r="2" fill="#fff"/><path fill="#f0a020" d="M7 7h6l-3 2zM4 18h5v2H4zM11 18h5v2h-5z"/></svg>
            <svg viewBox="0 0 20 20"><circle cx="10" cy="10" r="9" fill="#58a83a"/><circle cx="10" cy="9" r="8" fill="#f2e436"/><path stroke="#3d7d22" stroke-width="2" d="M10 5v9M5 9h10"/></svg>
            <svg viewBox="0 0 20 20"><path fill="none" stroke="#ddd" d="M3 18Q4 5 17 3M6 18Q7 9 17 7M9 18q1-6 8-7M12 18q1-3 5-3"/><circle cx="16" cy="17" r="1" fill="#fff"/></svg>
            <svg viewBox="0 0 20 20"><path fill="none" stroke="#fff" d="M2 8h3l4-4v13l-4-4H2zM12 8q2 2 0 5M14 6q4 4 0 9"/><path fill="none" stroke="#8b93a0" d="M16 4q5 6 0 13"/></svg>
            <span>中</span>
        </div>
    </footer>

    <svg class="cursor" viewBox="0 0 22 28"><path fill="#fff" stroke="#111" d="M1 1v18l4-4 3 7 4-2-3-6h6z"/><path fill="#111" d="M11 14h9v12h-9z"/><path fill="#fff" d="M12 15h7v10h-7z"/><path stroke="#111" d="M13 17h5M13 20h5M13 23h5"/></svg>

    <script>
        const joints = {
            head: [1065, 399], neck: [1062, 451], clavL: [1045, 455], clavR: [1075, 456],
            shoulderL: [1006, 453], shoulderR: [1118, 459], elbowL: [970, 555], elbowR: [1176, 559],
            handL: [1037, 466], handR: [1160, 467], chest: [1055, 531], spine: [1052, 609],
            hips: [1052, 637], hipL: [1015, 637], hipR: [1087, 638], kneeL: [966, 801],
            kneeR: [1153, 792], ankleL: [943, 900], ankleR: [1163, 923], toeL: [925, 937], toeR: [1185, 963]
        };
        const bones = [
            ['neck', 'head'], ['chest', 'neck'], ['chest', 'clavL'], ['chest', 'clavR'],
            ['clavL', 'shoulderL'], ['clavR', 'shoulderR'], ['shoulderL', 'elbowL'], ['shoulderR', 'elbowR'],
            ['elbowL', 'handL'], ['elbowR', 'handR'], ['spine', 'chest'], ['hips', 'spine'],
            ['hips', 'hipL'], ['hips', 'hipR'], ['hipL', 'kneeL'], ['hipR', 'kneeR'],
            ['kneeL', 'ankleL'], ['kneeR', 'ankleR'], ['ankleL', 'toeL'], ['ankleR', 'toeR']
        ];

        let drawing = '';
        Object.values(joints).forEach(([x, y]) => {
            drawing += `<circle cx="${x}" cy="${y}" r="7"/><path d="M${x - 7} ${y + 1}q7 3 14 -1M${x - 6} ${y - 3}q6 -2 12 0M${x} ${y - 7}q-3 7 1 14M${x + 1} ${y - 7}q4 7 0 14"/>`;
        });
        bones.forEach(([from, to]) => {
            const [ax, ay] = joints[from];
            const [bx, by] = joints[to];
            const len = Math.hypot(bx - ax, by - ay);
            const ux = (bx - ax) / len, uy = (by - ay) / len;
            const gap = len > 30 ? 8 : 4;
            const x = ax + ux * gap, y = ay + uy * gap;
            const tip = `${bx - ux * 8} ${by - uy * 8}`;
            [-7, -2, 2, 7].forEach(w => {
                drawing += `<path d="M${x - uy * w} ${y + ux * w}L${tip}"/>`;
            });
            drawing += `<path d="M${x - uy * 7} ${y + ux * 7}L${x + uy * 7} ${y - ux * 7}"/>`;
        });
        document.getElementById('skeleton').innerHTML = drawing;

        let grid = '';
        for (let i = 1; i < 8; i++) {
            const t = i / 8;
            grid += `<path d="M${960 + 60 * t} ${939 - 19 * t}l63 21M${960 + 64 * t} ${939 + 21 * t}l59 -20"/>`;
        }
        document.getElementById('grid').innerHTML = grid;

        let ticks = '';
        for (let frame = 10; frame <= 215; frame += 5) {
            ticks += frame === 55 ? `<li class="now">55<b>55</b></li>` : `<li>${frame}</li>`;
        }
        document.getElementById('ticks').innerHTML = ticks;
    </script>
</body>
</html>
```
FILE: styles.css
```css
* {
    box-sizing: border-box;
}

body {
    margin: 0;
    min-height: 100vh;
    display: flex;
    flex-direction: column;
    position: relative;
    overflow-x: hidden;
    background-color: #444345;
    color: #c8c8c8;
    font-family: "Noto Sans", "Noto Sans CJK SC", sans-serif;
    font-size: 12px;
    line-height: 16px;
}

button, input, select {
    font: inherit;
    color: inherit;
    margin: 0;
    padding: 0;
    border: none;
    background: none;
}

button {
    flex: none;
    white-space: nowrap;
}

svg {
    display: block;
}

/* icon paint */
.grey { fill: #cfcfcf; }
.teal { fill: #56a9b2; }
.orange { fill: #e0995a; }
.green { fill: #63ad88; }
.dark { fill: #444345; }
.ink { fill: #1c3a4a; }
.checker-bg { fill: #e6e6e6; }
.checker { fill: #222; }
.l-grey, .l-teal, .l-orange, .l-dark, .l-white, .l-object { fill: none; }
.l-grey { stroke: #cfcfcf; }
.l-teal { stroke: #56a9b2; }
.l-orange { stroke: #e0995a; }
.l-dark { stroke: #463a34; }
.l-white { stroke: #fff; }
.l-object { stroke: #173f55; }
.pointer { fill: #e8e8e8; stroke: #5382a6; }
.thick { stroke-width: 2; }
.magnet { stroke-width: 3; }

.sep {
    flex: none;
    width: 23px;
    height: 20px;
    background: linear-gradient(#8a8a8a, #8a8a8a) center / 2px 18px no-repeat,
                linear-gradient(#8a8a8a, #8a8a8a) center / 4px 10px no-repeat;
}

.fold {
    background: linear-gradient(#8a8a8a, #8a8a8a) center / 1px 18px no-repeat,
                linear-gradient(#8a8a8a, #8a8a8a) center / 3px 8px no-repeat;
}

.caret {
    flex: none;
    width: 11px;
    height: 6px;
    background-color: #8f8f8f;
    clip-path: polygon(20% 0, 80% 0, 50% 100%);
}

.caret.wide {
    width: 10px;
    margin: 0 4px;
}

.field {
    width: 99px;
    height: 22px;
    padding: 0 5px;
    border: 1px solid #545355;
    border-radius: 2px;
    background-color: #403f41;
}

select {
    appearance: none;
    background: url("data:image/svg+xml,%3Csvg xmlns='http://www.w3.org/2000/svg' width='10' height='6'%3E%3Cpath fill='%23ccc' d='M0 0h10L5 6z'/%3E%3C/svg%3E") right 5px center no-repeat #5d5d5d;
}

.title-bar {
    height: 23px;
    padding-top: 4px;
    background-color: #fff;
    color: #111;
    text-indent: -2px;
}

.menu-bar {
    height: 24px;
    display: flex;
    align-items: center;
    gap: 15px;
    margin-left: -2px;
}

.vray {
    margin: 0 -5px 0 -4px;
    padding: 0 5px;
    height: 20px;
    color: #3fd64a;
    background: linear-gradient(#3fd64a, #3fd64a) 0 0 / 4px 2px no-repeat,
                linear-gradient(#3fd64a, #3fd64a) 0 100% / 4px 2px no-repeat,
                linear-gradient(#3fd64a, #3fd64a) 100% 0 / 4px 2px no-repeat,
                linear-gradient(#3fd64a, #3fd64a) 100% 100% / 4px 2px no-repeat,
                #2b3a2c;
    border-left: 2px solid #3fd64a;
    border-right: 2px solid #3fd64a;
}

.workspace-label {
    margin-left: auto;
    margin-right: 84px;
}

.upload {
    position: absolute;
    top: 28px;
    right: 0;
    width: 83px;
    height: 25px;
    display: flex;
    align-items: center;
    overflow: hidden;
    white-space: nowrap;
    border: 1px solid #2f93e4;
    border-right: none;
    border-radius: 4px 0 0 4px;
    background-color: #cdeefd;
    color: #3f9fd0;
}

.upload-icon {
    flex: none;
    width: 29px;
    height: 25px;
    padding: 2px;
    margin-right: 12px;
    background-color: #2e97ea;
}

.status-line {
    height: 34px;
    display: flex;
    align-items: center;
    padding-left: 6px;
    border-bottom: 2px solid #393839;
}

.tool {
    width: 23px;
    height: 22px;
    padding: 2px;
}

.tool svg {
    width: 19px;
    height: 18px;
}

.on, .mask {
    background-color: #5382a6;
}

.mask {
    border-right: 1px solid #3b6480;
}

.mask .l-dark {
    stroke: #173f55;
}

.ipr {
    font-size: 8px;
    font-weight: bold;
    fill: #333;
}

.login {
    display: flex;
    align-items: center;
    width: 121px;
    height: 22px;
    margin-left: -2px;
    padding-left: 5px;
    background-color: #5d5d5d;
    color: #eee;
}

.login svg {
    width: 16px;
    height: 16px;
    margin-right: 5px;
}

.login select {
    flex: 1;
    height: 22px;
}

.ms-tools {
    margin-left: 3px;
    color: #22c82c;
    font-size: 20px;
    font-weight: 900;
    line-height: 22px;
    text-decoration: none;
    text-shadow: 1px 1px 0 #033a06, -1px 1px 0 #033a06, 0 -1px 0 #033a06, 0 2px 1px #011;
}

.shelf-tabs {
    display: flex;
    height: 22px;
    margin-top: 2px;
    padding-top: 2px;
    background-color: #373638;
    color: #9b9b9b;
}

.shelf-tabs button {
    height: 20px;
    padding: 2px 12px 0 11px;
    border-right: 1px solid #2f2e30;
    background-color: #3c3b3d;
}

.shelf-tabs .user {
    padding: 2px 13px 0 12px;
}

.shelf-tabs button.active {
    margin-left: -13px;
    background-color: #444345;
    color: #eee;
}

.shelf {
    height: 48px;
    display: flex;
    align-items: flex-start;
    padding-top: 2px;
    border-bottom: 2px solid #373638;
}

.shelf button {
    width: 35px;
    height: 36px;
    padding: 4px;
    position: relative;
}

.shelf button:first-child {
    margin-left: -17px;
}

.shelf svg {
    width: 27px;
    height: 27px;
}

.shelf .more::after {
    content: "";
    position: absolute;
    right: 3px;
    bottom: 2px;
    border: 3px solid #ddd;
    border-left-color: transparent;
    border-top-color: transparent;
}

.shelf .type {
    padding: 0;
    color: #e0995a;
    font-family: "Liberation Serif", serif;
    font-size: 34px;
    line-height: 34px;
    font-weight: bold;
}

.svg-badge {
    display: block;
    width: 23px;
    height: 23px;
    margin: 0 auto;
    background-color: #e0995a;
    color: #3a2b20;
    font-size: 12px;
    font-weight: bold;
    line-height: 22px;
}

.zeros {
    font-size: 11px;
    fill: #5ab4bf;
}

.bar {
    flex: none;
    width: 2px;
    height: 35px;
    margin: 0 5px;
    background-color: #929292;
}

/* outliner */
.workspace {
    flex: 1;
    display: flex;
    min-height: 600px;
}

.outliner {
    flex: none;
    width: 188px;
    display: flex;
    flex-direction: column;
    padding: 20px 9px 11px 0;
    background: linear-gradient(#373638, #373638) 0 0 / 182px 20px no-repeat;
}

.outliner-menu {
    height: 29px;
    padding: 5px 7px;
}

.search {
    display: flex;
    align-items: center;
    width: 177px;
    height: 21px;
    background-color: #2a2a2a;
}

.search input {
    flex: 1;
    min-width: 0;
}

.search .caret {
    width: 16px;
    height: 7px;
    background-color: #c8c8c8;
}

.outliner-body {
    flex: 1;
    display: flex;
    justify-content: space-between;
    background-color: #373638;
    overflow: hidden;
}

.nodes {
    width: 120px;
    margin: 0;
    padding: 1px 0;
    list-style: none;
    overflow: hidden;
    line-height: 20px;
}

.nodes li {
    height: 20px;
    margin-left: -23px;
}

.nodes li:nth-child(5) { margin-left: -14px; }

.scroll-y {
    width: 12px;
    display: flex;
    flex-direction: column;
    align-items: center;
    gap: 5px;
    padding: 4px 0;
}

.scroll-y b {
    flex: 1;
    width: 10px;
    border-radius: 4px;
    background-color: #5d5d5d;
}

.scroll-y i {
    width: 10px;
    height: 5px;
    background-color: #c8c8c8;
}

.nodes .dim {
    color: #666;
}

.up { clip-path: polygon(50% 0, 100% 100%, 0 100%); }
.down { clip-path: polygon(0 0, 100% 0, 50% 100%); }

.scroll-x {
    display: flex;
    align-items: center;
    gap: 4px;
    height: 10px;
    background-color: #373638;
}

.scroll-x b {
    width: 154px;
    height: 10px;
    border-radius: 0 4px 4px 0;
    background-color: #5d5d5d;
}

.scroll-x i {
    width: 5px;
    height: 9px;
    background-color: #c8c8c8;
    clip-path: polygon(0 0, 100% 50%, 0 100%);
}

.grip {
    width: 86px;
    margin: 2px 0 -3px 6px;
    border-top: 1px dotted #888;
}

/* viewport panel */
.panel {
    flex: 1;
    min-width: 0;
    display: flex;
    flex-direction: column;
    margin: 3px 0 4px;
    padding: 0 2px 2px;
    border: 1px solid #8a8a8a;
}

.panel-menu {
    display: flex;
    align-items: center;
    gap: 15px;
    height: 22px;
    padding-left: 6px;
}

.panel-tools {
    display: flex;
    align-items: center;
    height: 22px;
    margin-left: -2px;
}

.panel-tools .sep {
    width: 11px;
}

.panel-tools button {
    width: 19px;
    height: 18px;
}

.panel-tools svg {
    width: 18px;
    height: 17px;
}

.panel-tools .vray-on {
    border-left: 1px solid #3fc84a;
    border-right: 1px solid #3fc84a;
    background-color: #2c5a30;
}

.panel-tools .off {
    background-color: #3a393b;
}

.number {
    width: 38px;
    height: 18px;
    margin: 0 2px;
    padding-left: 5px;
    border-radius: 2px;
    background-color: #2a2a2a;
}

.on-text {
    font-size: 7px;
    font-weight: bold;
    fill: #1c4a58;
}

.gamma {
    width: 150px;
    height: 18px;
    margin-left: 3px;
    padding-left: 3px;
}

.viewport {
    flex: 1;
    position: relative;
    overflow: hidden;
    background: linear-gradient(#8a9eb7 0%, #7e90a6 18%, #697b8b 42%, #5a6878 60%, #4a5461 75%, #2c313d 90%, #1a1c22 96%, #101014 100%);
}

.scene {
    position: absolute;
    inset: 0;
    width: 100%;
    height: 100%;
}

.skeleton {
    fill: none;
    stroke: #22084c;
    stroke-width: 1;
}

.axis {
    font-size: 12px;
    font-weight: bold;
}

.camera-name {
    font-size: 11px;
    font-weight: bold;
    fill: #fff;
}

.hud {
    position: absolute;
    top: -5px;
    left: 15px;
    border-collapse: collapse;
    color: #fff;
    font-size: 11px;
    font-weight: bold;
}

.hud tr {
    height: 20px;
}

.hud th {
    width: 108px;
    padding: 0;
    text-align: left;
}

.hud td {
    width: 65px;
    padding: 0;
}

/* character controls */
.character {
    flex: none;
    width: 587px;
    padding: 7px 0 0 11px;
    border-left: 3px solid #3d3c3e;
}

.character-head {
    display: flex;
    align-items: center;
    width: 267px;
    height: 48px;
    margin-bottom: 9px;
}

.hik {
    width: 39px;
    height: 39px;
    margin-left: -3px;
}

.character-form {
    flex: 1;
    display: grid;
    grid-template-columns: 1fr 153px;
    gap: 4px;
    align-items: center;
    text-align: right;
}

.character-form select {
    height: 22px;
    padding-left: 3px;
}

.character-form select:disabled {
    background-color: #4a494b;
    color: #6c6c6c;
    opacity: 1;
}

.character-form label:nth-of-type(2) {
    color: #8b8b8b;
}

.group {
    width: 268px;
    display: flex;
    flex-direction: column;
    align-items: center;
    gap: 5px;
    margin-bottom: 6px;
}

.group h2 {
    width: 100%;
    height: 24px;
    margin: 0 0 1px;
    padding: 5px 0 0 32px;
    background-color: #5d5d5d;
    font-size: 12px;
    font-weight: normal;
    line-height: 16px;
    position: relative;
}

.group h2::before {
    content: "";
    position: absolute;
    left: 8px;
    top: 7px;
    width: 13px;
    height: 7px;
    background-color: #eee;
    clip-path: polygon(0 0, 100% 0, 50% 100%);
}

.group button {
    width: 208px;
    height: 27px;
    border-radius: 1px;
    background-color: #5d5d5d;
    color: #e6e6e6;
}

/* time and range sliders */
.time-row, .range-row, .command-row, .help-line {
    border-top: 2px solid #393839;
}

.time-row {
    display: flex;
    align-items: center;
    height: 39px;
    padding-bottom: 3px;
    overflow: hidden;
}

.timeline {
    flex: 1;
    height: 28px;
    overflow: hidden;
    background-color: #2a2a2a;
}

#ticks {
    display: flex;
    width: calc(100% + 10px);
    height: 28px;
    margin: 0 0 0 -1px;
    padding: 0;
    list-style: none;
    color: #7d7d7d;
}

#ticks li {
    flex: 1;
    position: relative;
    padding-left: 2px;
    line-height: 13px;
    background: linear-gradient(#8a8a8a, #8a8a8a) 0 100% / 2px 11px no-repeat;
}

#ticks .now {
    background: linear-gradient(#8a8a8a, #8a8a8a) 0 100% / 2px 11px no-repeat,
                linear-gradient(#606060, #606060) 2px 0 / 8px 28px no-repeat;
}

#ticks b {
    display: block;
    color: #fff;
    font-weight: normal;
    line-height: 12px;
}

.current-time {
    width: 86px;
    height: 21px;
    margin: 0 6px 0 7px;
    padding-left: 5px;
    background-color: #403f41;
    color: #666;
}

.playback {
    display: flex;
    gap: 7px;
    width: 68px;
    padding-left: 6px;
    overflow: hidden;
}

.playback svg {
    width: 16px;
    height: 16px;
}

.range-row {
    display: flex;
    align-items: center;
    height: 38px;
    padding-bottom: 3px;
    overflow: hidden;
}

.range-row .sep {
    width: 10px;
}

.range-start, .range-value {
    flex: none;
    width: 70px;
    height: 27px;
    border-radius: 2px;
    background-color: #2a2a2a;
}

.range {
    flex: 1;
    height: 27px;
    margin-left: 7px;
    padding: 2px 9px;
    background-color: #373638;
}

.range-bar {
    display: flex;
    align-items: center;
    gap: 4px;
    height: 23px;
    padding: 0 3px;
    border-radius: 3px;
    background-color: #5d5d5d;
}

.range-bar i {
    width: 17px;
    height: 17px;
    border-radius: 4px;
    background-color: #999;
}

.range-end {
    margin-left: auto;
}

.range-value {
    width: 88px;
    margin-left: 8px;
    padding-left: 5px;
}

.range-row .caret {
    width: 10px;
    margin: 0 7px 0 10px;
}

.range-row .field {
    width: 102px;
    height: 26px;
}

.range-row .sep:nth-of-type(4) {
    margin: 0 8px 0 6px;
}

.fps {
    width: 103px;
    height: 22px;
    padding-left: 3px;
}

.loop {
    flex: none;
    width: 16px;
    height: 16px;
    margin: 0 -11px 0 11px;
}

.command-row {
    display: flex;
    align-items: center;
    gap: 8px;
    height: 32px;
}

.command {
    width: 538px;
    height: 23px;
    background-color: #2a2a2a;
}

.result {
    flex: 1;
    height: 24px;
    background-color: #2a2a2a;
}

.help-line {
    height: 27px;
    padding-top: 5px;
    text-indent: -36px;
}

/* taskbar */
.taskbar {
    display: flex;
    height: 40px;
    padding-left: 16px;
    background: linear-gradient(90deg, #22353f 0%, #21363f 45%, #1f2d40 75%, #1a2442 100%);
}

.taskbar button {
    width: 49px;
    height: 40px;
    padding: 0 10px;
}

.taskbar button svg {
    width: 28px;
    height: 28px;
}

.taskbar .ie {
    width: 59px;
    display: flex;
    align-items: center;
    gap: 6px;
    padding: 0 0 0 13px;
}

.ie i {
    width: 5px;
    height: 10px;
    background-color: #2f86e0;
    clip-path: polygon(0 0, 100% 50%, 0 100%);
}

.taskbar .run {
    background: linear-gradient(#86b8e6, #86b8e6) center bottom / 40px 3px no-repeat;
}

.taskbar .double {
    background: linear-gradient(90deg, #86b8e6 31px, #5c86a8 31px) center bottom / 40px 3px no-repeat;
}

.taskbar .current {
    background: linear-gradient(#86b8e6, #86b8e6) center bottom / 45px 3px no-repeat,
                linear-gradient(#50626c, #50626c) center / 45px 40px no-repeat;
}

.tray {
    display: flex;
    align-items: center;
    gap: 5px;
    width: 161px;
    margin-left: auto;
    color: #fff;
    font-size: 16px;
}

.tray svg {
    flex: none;
    width: 19px;
    height: 19px;
}

.cursor {
    position: absolute;
    left: 496px;
    top: 1288px;
    width: 22px;
    height: 28px;
}
```
